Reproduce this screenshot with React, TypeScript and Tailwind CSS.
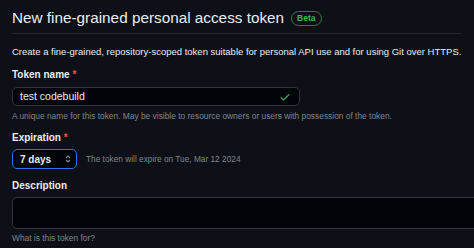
export default function App() {
  return (
    <div
      className="h-[248px] w-[474px] overflow-hidden bg-[#0d1117] text-[#e6edf3]"
      style={{ fontFamily: '"Liberation Sans", Arial, sans-serif' }}
    >
      <div className="px-3 pt-[7px]">
        {/* Header */}
        <div className="flex items-center border-b border-[#21262d] pb-[4px]">
          <h1 className="text-[15.3px] leading-[22px] font-normal">New fine-grained personal access token</h1>
          <span className="ml-[7px] flex h-[15px] items-center rounded-full border border-[#238636] px-[5px] text-[8.5px] font-semibold text-[#3fb950]">
            Beta
          </span>
        </div>

        <p className="mt-[11px] text-[9.5px] leading-[14px] whitespace-nowrap">
          Create a fine-grained, repository-scoped token suitable for personal API use and for using Git over HTTPS.
        </p>

        {/* Token name */}
        <div className="mt-[9px] text-[10px] leading-[14px] font-bold">
          Token name <span className="text-[#f85149]">*</span>
        </div>
        <div className="mt-[5px] flex h-[19px] w-[288px] items-center justify-between rounded-[5px] border border-[#30363d] bg-[#010409] pr-[8px] pl-[7px]">
          <span className="text-[10.5px]">test codebuild</span>
          <svg width="12" height="12" viewBox="0 0 16 16" fill="#3fb950">
            <path d="M13.78 4.22a.75.75 0 0 1 0 1.06l-7.25 7.25a.75.75 0 0 1-1.06 0L2.22 9.28a.751.751 0 0 1 .018-1.042.751.751 0 0 1 1.042-.018L6 10.94l6.72-6.72a.75.75 0 0 1 1.06 0Z" />
          </svg>
        </div>
        <p className="mt-[4px] text-[8.4px] leading-[12px] text-[#7d8590] whitespace-nowrap">
          A unique name for this token. May be visible to resource owners or users with possession of the token.
        </p>

        {/* Expiration */}
        <div className="mt-[9px] text-[10px] leading-[14px] font-bold">
          Expiration <span className="text-[#f85149]">*</span>
        </div>
        <div className="mt-[4px] flex items-center gap-[9px]">
          <div className="flex h-[20px] w-[65px] items-center justify-between rounded-[5px] border-[1.5px] border-[#2f6feb] bg-[#010409] pr-[5px] pl-[7px]">
            <span className="text-[10px] font-semibold">7 days</span>
            <svg width="6" height="8" viewBox="0 0 6 8" fill="none" stroke="#7d8590" strokeWidth="1.2">
              <path d="M1 3 L3 1 L5 3" />
              <path d="M1 5 L3 7 L5 5" />
            </svg>
          </div>
          <span className="text-[8.3px] text-[#7d8590]">The token will expire on Tue, Mar 12 2024</span>
        </div>

        {/* Description */}
        <div className="mt-[10px] text-[10px] leading-[14px] font-bold">Description</div>
        <div className="mt-[4px] -mr-[20px] h-[32px] rounded-l-[5px] border border-[#30363d] bg-[#010409]" />
        <p className="mt-[3px] text-[8.4px] leading-[12px] text-[#7d8590]">What is this token for?</p>
      </div>
    </div>
  );
}
